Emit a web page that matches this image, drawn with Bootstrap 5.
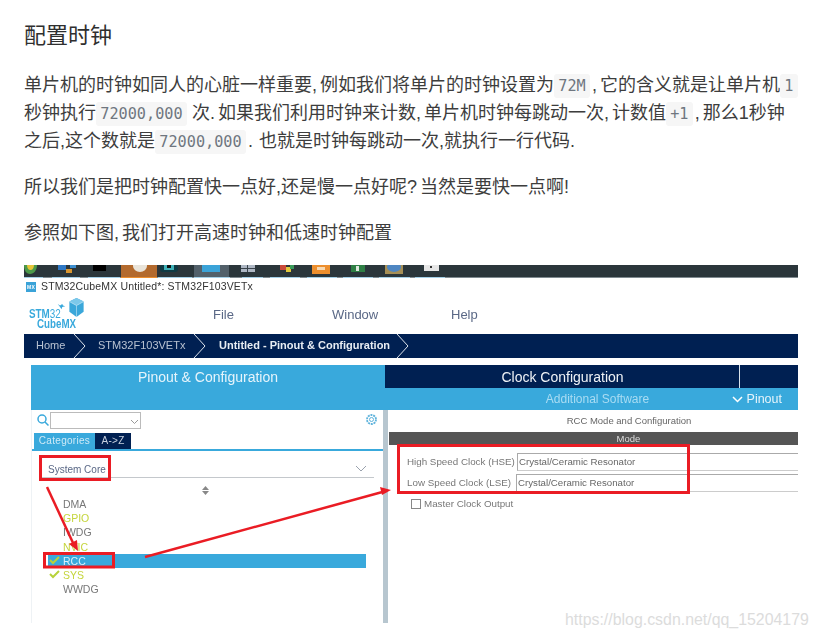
<!DOCTYPE html>
<html lang="zh">
<head>
<meta charset="utf-8">
<title>配置时钟</title>
<link href="https://cdn.jsdelivr.net/npm/bootstrap@5.3.0/dist/css/bootstrap.min.css" rel="stylesheet">
<style>
html,body{height:639px;overflow:hidden}
body{background:#fff;color:#3d3d3d;font-family:"Liberation Sans","Noto Sans CJK SC",sans-serif;padding:0 20px 0 24px;position:relative}
.art-title{font-size:22px;line-height:28px;font-weight:400;color:#2f2f2f;margin:22px 0 21px}
.art-p{font-size:18px;line-height:28px;height:auto;margin:0 0 18px;color:#3d3d3d;white-space:nowrap;word-spacing:-2px}
.art-line{display:block;height:28px}
.art-p code{font-family:"DejaVu Sans Mono",monospace;font-size:15.2px;line-height:1;color:#6f7680;background:#f6f6f6;padding:2.700px 4.300px;border-radius:3px;margin:0 2px 0 0}
.dotg{word-spacing:1px}
.shot{width:774px;height:358px;position:relative;overflow:hidden;background:#fff;font-family:"Liberation Sans",sans-serif;filter:blur(.45px)}
.task{height:13px;background:#2b363b;position:relative;flex:none}
.tk{position:absolute;top:0;left:0}
.wtitle{height:18px;padding-left:2px;font-size:10.5px;color:#333;letter-spacing:.15px;gap:5px;flex:none}
.mx{width:10px;height:10px;background:#3ba3d8;color:#fff;font-size:5px;font-weight:700;line-height:10px;text-align:center}
.menubar{height:38px;color:#5a6886;font-size:13px;flex:none}
.logo{width:189px;position:relative;height:38px;flex:none}
.lg1,.lg2{position:absolute;color:#39a9dc;font-weight:700;line-height:10px;height:10px;transform-origin:0 0;white-space:nowrap}
.lg1{left:5px;top:13px;font-size:13px;transform:scaleX(.76)}
.lg1 span{font-weight:400}
.lg2{left:13px;top:23px;font-size:12.5px;transform:scaleX(.78)}
.lg-cube{position:absolute;left:44px;top:2px}
.m1{width:119px}.m2{width:119px}
.crumbs{height:24px;background:#002052;color:#b9c3d2;font-size:11px;position:relative;flex:none}
.crumbs span{position:absolute;top:0;line-height:23px;white-space:nowrap}
.crumbs b{color:#e8edf3}
.crumbs svg{position:absolute;top:0}
.gap7{height:7px;flex:none}
.tabs{margin-left:7px;height:45px;flex:none}
.pin{width:354px;background:#39a9dc;color:#e6f4fb;font-size:14px;text-align:center;line-height:24px;padding-right:0;flex:none}
.tabs-r{flex:1}
.tr1{height:23px;background:#002052;color:#eef2f6;font-size:14px;line-height:24px}
.clk{width:354px;margin-left:1px;text-align:center;border-right:1px solid #d8e2ea;flex:none}
.tr2{height:22px;background:#39a9dc;color:#a9dcf3;font-size:12px;line-height:22px;position:relative;text-align:center;padding-left:12px}
.tr2 i{position:absolute;right:16px;top:0;font-style:normal;color:#e6f4fb;font-size:12.5px}
.tr2 svg{position:absolute;right:55px;top:8px}
.body-row{height:213px;margin-left:7px;flex:none}
.lp{width:352px;position:relative;flex:none;border-left:1px solid #eef2f5}
.split{width:5px;background:#b7c6cf;flex:none}
.rp{flex:1;position:relative;color:#666}
.sel{position:absolute;left:18px;top:2px;width:91px;height:17px;border:1px solid #bbb;background:#fff}
.tabc,.tabz{position:absolute;top:23px;height:16px;font-size:10px;line-height:16px;text-align:center;letter-spacing:.3px}
.tabc{left:2px;width:61px;background:#39a9dc;color:#cfeaf7}
.tabz{left:63px;width:36px;background:#002052;color:#c6d0de}
.tline{position:absolute;left:0;right:0;top:39px;height:2px;background:#39a9dc}
.syscore{position:absolute;left:16px;top:52px;font-size:10px;color:#5a6886}
.uline{position:absolute;left:8px;right:9px;top:67px;height:1px;background:#c4c8cc}
.tree{position:absolute;left:0;right:0;top:87px;font-size:10.5px;line-height:14.2px;color:#777}
.tree div{padding-left:31px;height:14.2px}
.tree .ok{color:#c5d53c}
.tree .sel-row{background:#39a9dc;color:#d9f0fb;margin:0 17px 0 16px;padding-left:15px}
.rtitle{text-align:center;font-size:9.5px;color:#666;height:22px;line-height:21px;padding-left:72px}
.modebar{height:13px;background:#555;color:#ddd;font-size:9.5px;line-height:13px;text-align:center;margin-left:1px;padding-left:70px}
.frow{position:absolute;left:19px;right:0;font-size:9.8px;color:#777}
.frow em{font-style:normal;display:inline-block;position:absolute;height:18px;right:0;border:1px solid #aaa;border-right:0;border-bottom-color:#ccc;color:#666;line-height:16px;padding-left:1px;font-size:9.7px}
.mco{position:absolute;left:23px;top:87px;font-size:9.8px;color:#777;gap:3px}
.mco i{display:block;width:10px;height:10px;border:1px solid #888;background:#fff}
.anno{position:absolute;left:0;top:0;pointer-events:none}
.wm{position:absolute;left:565px;top:610px;font-size:15.9px;line-height:20px;color:#dcdcdc;white-space:nowrap}
</style>
</head>
<body>
<h2 class="art-title">配置时钟</h2>
<p class="art-p"><span class="art-line">单片机的时钟如同人的心脏一样重要, 例如我们将单片的时钟设置为<code>72M</code>, 它的含义就是让单片机<code>1</code></span><span class="art-line">秒钟执行<code>72000,000</code> 次. 如果我们利用时钟来计数, 单片机时钟每跳动一次, 计数值<code>+1</code>, 那么1秒钟</span><span class="art-line">之后,这个数就是<code>72000,000</code><span class="dotg">. </span>也就是时钟每跳动一次,就执行一行代码.</span></p>
<p class="art-p"><span class="art-line">所以我们是把时钟配置快一点好,还是慢一点好呢? 当然是要快一点啊!</span></p>
<p class="art-p"><span class="art-line">参照如下图, 我们打开高速时钟和低速时钟配置</span></p>

<div class="shot d-flex flex-column">
  <div class="task">
    <svg class="tk" viewBox="0 0 774 13" width="774" height="13">
      <path d="M0 0h13c0 5-3 9-7 9S0 5 0 0z" fill="#4c9a4a"/><path d="M3 0h7c0 3-1.500 5-3.500 5S3 3 3 0z" fill="#e6c53a"/>
      <rect x="34" y="0" width="8" height="5" fill="#2f78c4"/><rect x="42" y="4" width="6" height="4" fill="#d9962f"/><rect x="46" y="0" width="6" height="3" fill="#3d8fd0"/>
      <rect x="69" y="0" width="13" height="6" fill="#000"/>
      <rect x="97" y="0" width="36" height="12" fill="#b36a2e"/><ellipse cx="116" cy="1" rx="7" ry="6" fill="#e9e4da"/>
      <rect x="136" y="0" width="18" height="7" rx="3" fill="#0f3a44"/><rect x="140" y="0" width="10" height="5" fill="#3fb1b8"/><rect x="143" y="0" width="4" height="3" fill="#111"/>
      <rect x="170" y="0" width="35" height="12" fill="#52606a"/><rect x="178" y="0" width="18" height="7" fill="#3ba3d8"/>
      <rect x="217" y="0" width="14" height="7" fill="#aeb7c4"/><rect x="223" y="0" width="1" height="7" fill="#39424a"/><rect x="217" y="3" width="14" height="1" fill="#39424a"/>
      <rect x="256" y="0" width="6" height="5" fill="#c94a3a"/><rect x="262" y="2" width="5" height="5" fill="#e1c93b"/><rect x="266" y="0" width="4" height="4" fill="#3a9a5a"/>
      <rect x="288" y="0" width="18" height="9" fill="#ed8f2e"/><rect x="293" y="2" width="8" height="3" fill="#f7d9b2"/>
      <rect x="327" y="0" width="14" height="7" fill="#2f7f45"/><rect x="332" y="1" width="3" height="5" fill="#dfe9df"/>
      <rect x="361" y="0" width="18" height="9" fill="#a68f56"/><ellipse cx="370" cy="2" rx="7" ry="5" fill="#4e86c2"/>
      <rect x="400" y="0" width="15" height="6" fill="#e6e6e6"/><rect x="406" y="1" width="2" height="2" fill="#333"/>
      <rect x="0" y="12" width="774" height="1" fill="#7f8a90"/>
      <g fill="#a4d0e8"><rect x="0" y="12" width="19" height="1"/><rect x="28" y="12" width="28" height="1"/><rect x="64" y="12" width="32" height="1"/><rect x="134" y="12" width="34" height="1"/><rect x="170" y="12" width="36" height="1"/><rect x="218" y="12" width="21" height="1"/><rect x="246" y="12" width="30" height="1"/><rect x="283" y="12" width="30" height="1"/><rect x="319" y="12" width="30" height="1"/><rect x="355" y="12" width="31" height="1"/><rect x="391" y="12" width="30" height="1"/></g>
      <rect x="97" y="12" width="36" height="1" fill="#ed8f2e"/>
    </svg>
  </div>
  <div class="wtitle d-flex align-items-center"><div class="mx">MX</div><div>STM32CubeMX Untitled*: STM32F103VETx</div></div>
  <div class="menubar d-flex align-items-center">
    <div class="logo">
      <span class="lg1">STM<span>32</span></span>
      <span class="lg2">CubeMX</span>
      <svg class="lg-cube" width="17" height="19" viewBox="0 0 20 24"><path d="M10 0l9 4.500v13L10 24l-9-6.500v-13z" fill="#3aa7da"/><path d="M10 0l9 4.500-9 5-9-5z" fill="#7cc8ea"/><path d="M10 9.500V24" stroke="#bfe4f5" stroke-width=".8"/><path d="M1 4.500l9 5 9-5" stroke="#d5eef9" stroke-width=".8" fill="none"/></svg>
      <svg class="anno" style="left:33px;top:7px" width="9" height="7" viewBox="0 0 12 9"><path d="M1 1l3 2 3-2 1 2 3 1-4 1-1 3-2-3z" fill="#39a9dc"/></svg>
    </div>
    <div class="m1">File</div><div class="m2">Window</div><div>Help</div>
  </div>
  <div class="crumbs">
    <span style="left:12px">Home</span>
    <svg style="left:49px" width="14" height="24" viewBox="0 0 14 24"><path d="M1 0l11 12L1 24" fill="none" stroke="#dfe6ee" stroke-width="1"/></svg>
    <span style="left:74px">STM32F103VETx</span>
    <svg style="left:169px" width="14" height="24" viewBox="0 0 14 24"><path d="M1 0l11 12L1 24" fill="none" stroke="#dfe6ee" stroke-width="1"/></svg>
    <span style="left:195px"><b>Untitled - Pinout &amp; Configuration</b></span>
    <svg style="left:372px" width="14" height="24" viewBox="0 0 14 24"><path d="M1 0l11 12L1 24" fill="none" stroke="#dfe6ee" stroke-width="1"/></svg>
  </div>
  <div class="gap7"></div>
  <div class="tabs d-flex">
    <div class="pin">Pinout &amp; Configuration</div>
    <div class="tabs-r d-flex flex-column">
      <div class="tr1 d-flex"><div class="clk">Clock Configuration</div></div>
      <div class="tr2">Additional Software<svg width="11" height="7" viewBox="0 0 11 7"><path d="M1 1l4.500 4.500L10 1" fill="none" stroke="#fff" stroke-width="1.500"/></svg><i>Pinout</i></div>
    </div>
  </div>
  <div class="body-row d-flex">
    <div class="lp">
      <svg class="anno" style="left:4px;top:3px" width="14" height="14" viewBox="0 0 14 14"><circle cx="6" cy="6" r="4" fill="none" stroke="#39a9dc" stroke-width="1.500"/><path d="M9 9l3.500 3.500" stroke="#39a9dc" stroke-width="1.500"/></svg>
      <div class="sel"><svg class="anno" style="left:79px;top:6px" width="9" height="6" viewBox="0 0 9 6"><path d="M1 1l3.500 3.500L8 1" fill="none" stroke="#999"/></svg></div>
      <svg class="anno" style="left:333px;top:3px" width="13" height="13" viewBox="0 0 13 13"><circle cx="6.500" cy="6.500" r="4.500" fill="none" stroke="#5fb3dc" stroke-width="1.800" stroke-dasharray="2 .8"/><circle cx="6.500" cy="6.500" r="2" fill="none" stroke="#5fb3dc"/></svg>
      <div class="tabc">Categories</div><div class="tabz">A-&gt;Z</div>
      <div class="tline"></div>
      <div class="syscore">System Core</div>
      <svg class="anno" style="left:323px;top:55px" width="12" height="8" viewBox="0 0 12 8"><path d="M1 1l5 5 5-5" fill="none" stroke="#9aa2ad"/></svg>
      <div class="uline"></div>
      <svg class="anno" style="left:170px;top:76px" width="7" height="9" viewBox="0 0 7 9"><path d="M3.500 0L7 4H0zM0 5h7L3.500 9z" fill="#888"/></svg>
      <div class="tree">
        <div>DMA</div><div class="ok">GPIO</div><div>IWDG</div><div class="ok">NVIC</div>
        <div class="sel-row">RCC</div><div class="ok">SYS</div><div>WWDG</div>
      </div>
      <svg class="anno" style="left:17px;top:144px" width="30" height="32" viewBox="0 0 30 32"><path d="M1 6l3 3 6-6" fill="none" stroke="#b7d23a" stroke-width="2"/><path d="M1 20l3 3 6-6" fill="none" stroke="#b7d23a" stroke-width="2"/></svg>
    </div>
    <div class="split"></div>
    <div class="rp">
      <div class="rtitle">RCC Mode and Configuration</div>
      <div class="modebar">Mode</div>
      <div class="frow" style="top:43px;line-height:18px">High Speed Clock (HSE)<em style="left:110px">Crystal/Ceramic Resonator</em></div>
      <div class="frow" style="top:64px;line-height:18px">Low Speed Clock (LSE)<em style="left:109px">Crystal/Ceramic Resonator</em></div>
      <div class="mco d-flex align-items-center"><i></i><span>Master Clock Output</span></div>
    </div>
  </div>
  <svg class="anno" width="774" height="358" viewBox="0 0 774 358">
    <g fill="none" stroke="#ea1c24" stroke-width="3">
      <rect x="16.500" y="191.500" width="69" height="23"/>
      <rect x="20.500" y="288.500" width="69" height="13.500"/>
      <rect x="374.500" y="180.500" width="290" height="47"/>
      <path d="M23 222l27 58" stroke-width="2.500"/>
      <path d="M121 292L362 226" stroke-width="2.500"/>
    </g>
    <path d="M54 286l-9-7 8-4z" fill="#ea1c24"/>
    <path d="M367 225l-11-3 2 8z" fill="#ea1c24"/>
  </svg>
</div>
<div class="wm">https://blog.csdn.net/qq_15204179</div>
<script src="https://cdn.jsdelivr.net/npm/bootstrap@5.3.0/dist/js/bootstrap.bundle.min.js"></script>
</body>
</html>
